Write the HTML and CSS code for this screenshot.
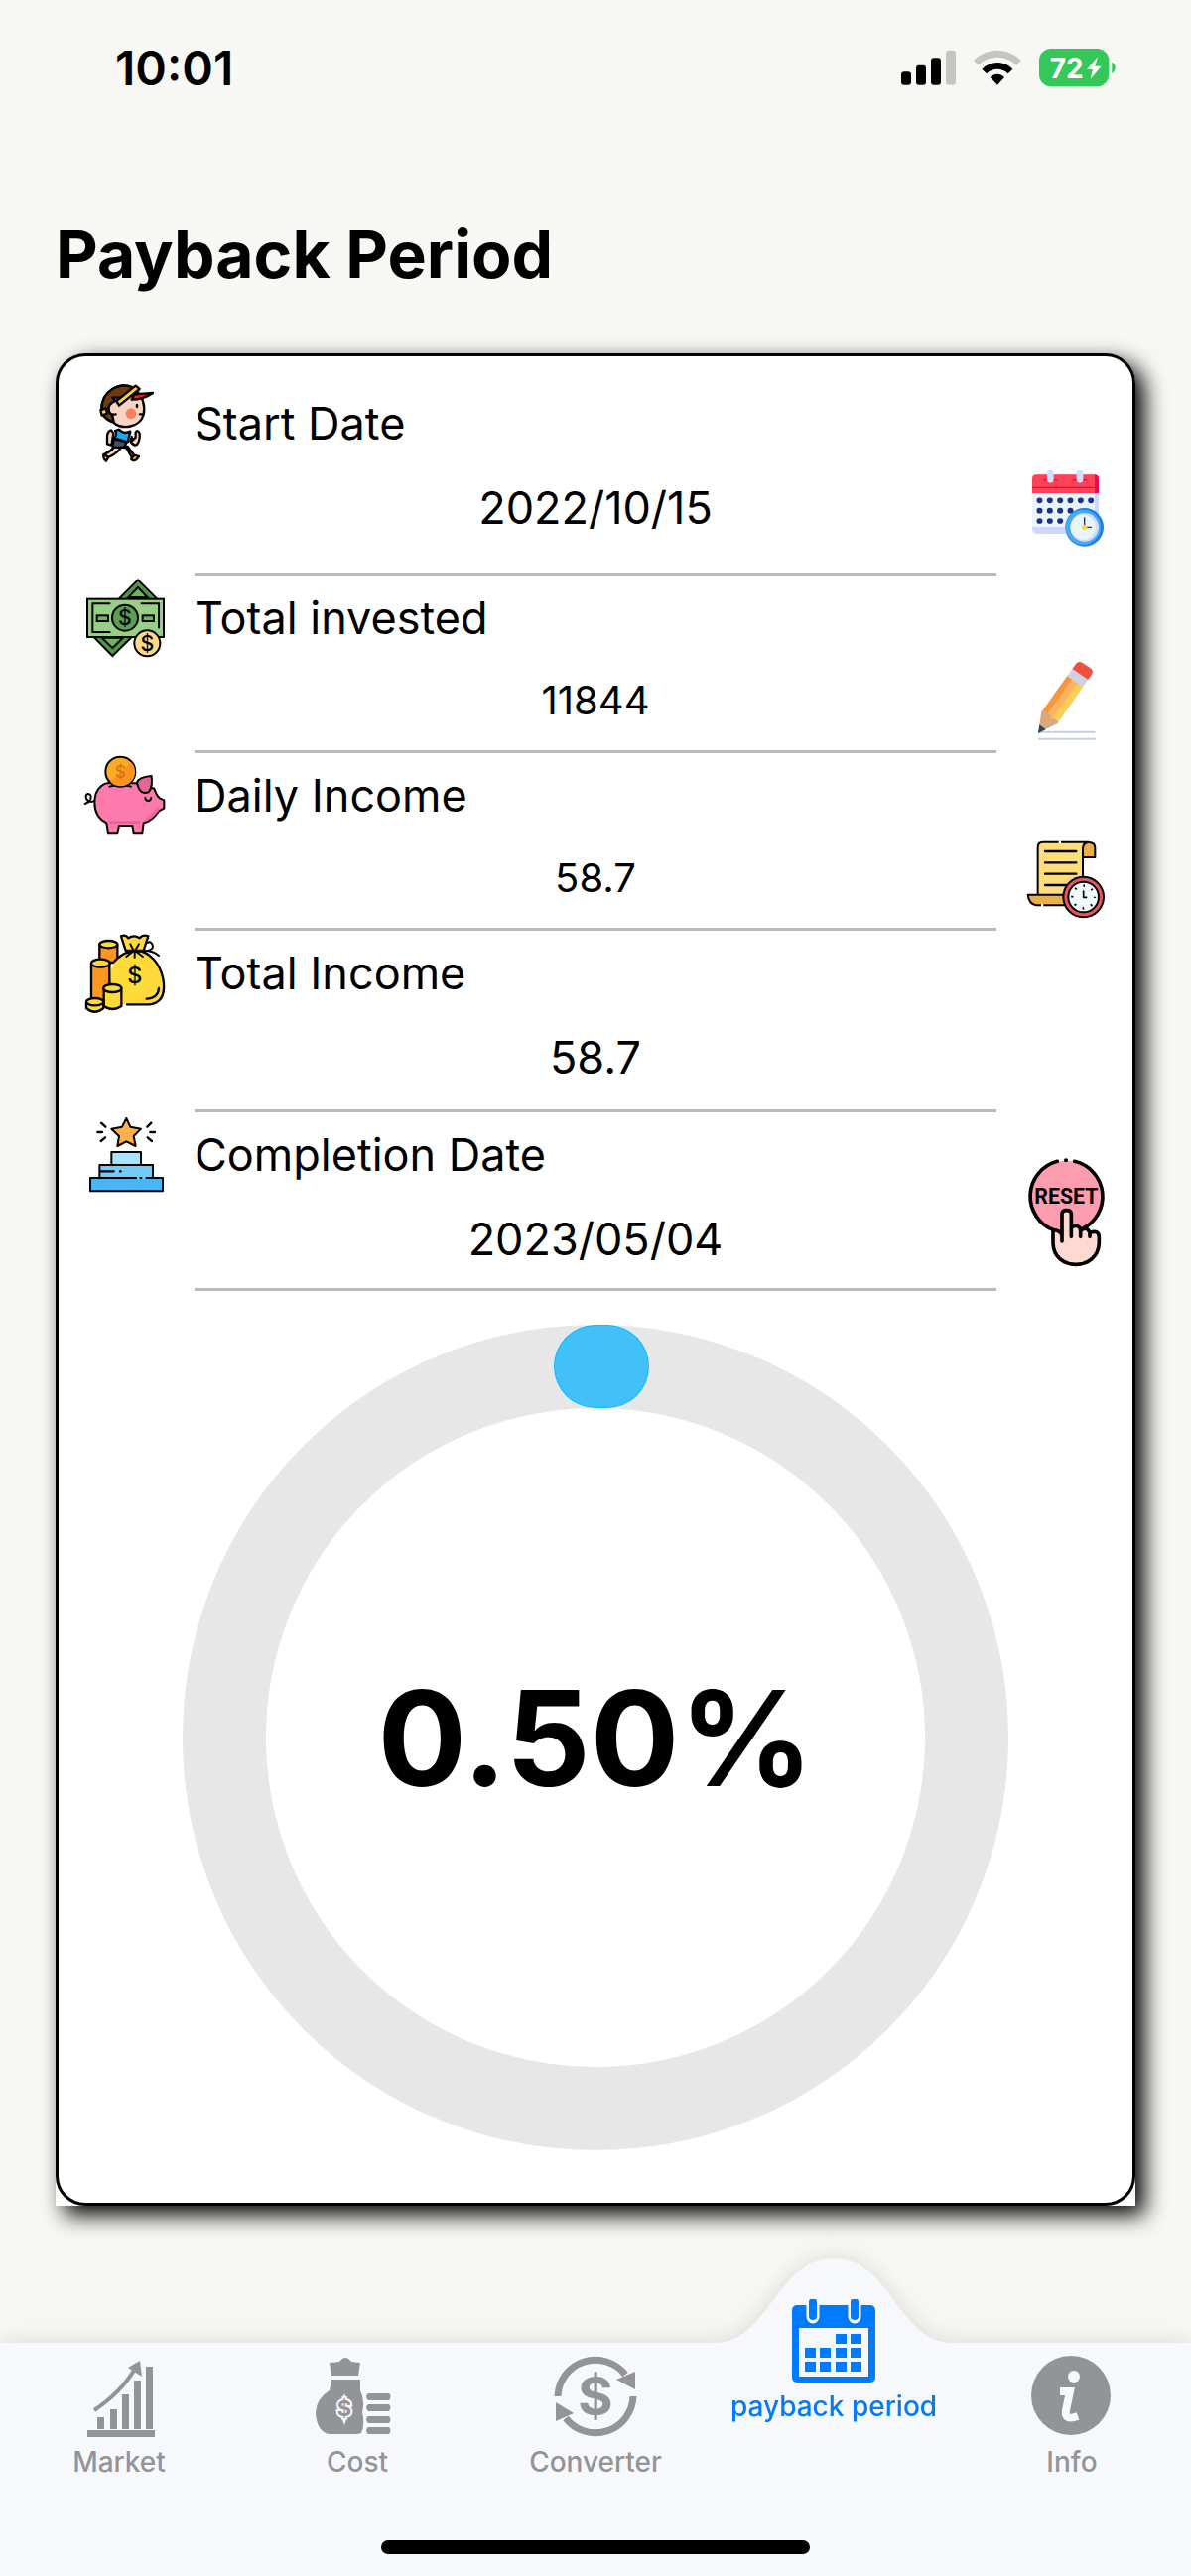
FILE: index.html
```html
<!DOCTYPE html>
<html lang="en">
<head>
<meta charset="utf-8">
<meta name="viewport" content="width=device-width, initial-scale=1">
<title>Payback Period</title>
<link rel="stylesheet" href="styles.css">
</head>
<body>
<header class="status">
  <span class="clock">10:01</span>
  <div class="indicators">
    <svg width="55" height="39" viewBox="87 55 165 117" aria-hidden="true">
      <rect x="87" y="125" width="30" height="40" rx="9"/>
      <rect x="132" y="105" width="30" height="60" rx="9"/>
      <rect x="177" y="83" width="30" height="82" rx="9"/>
      <rect x="222" y="60" width="30" height="105" rx="9" fill="#c5c5c3"/>
    </svg>
    <svg width="48" height="39" viewBox="304 55 144 117" aria-hidden="true">
      <path d="M304 91C344 50 407 50 447 91L433 105C400 73 351 73 318 105Z" fill="#c5c5c3"/>
      <path d="M329 117C355 90 396 90 422 117L408 131C390 113 361 113 343 131Z"/>
      <path d="M354 142C367 129 384 129 397 142L376 165Z"/>
    </svg>
    <svg width="77" height="39" viewBox="500 55 231 117" role="img" aria-label="Battery charging">
      <rect x="500" y="55" width="211" height="115" rx="36" fill="#35c759"/>
      <path d="M720 96Q730 100 730 112T720 130Z" fill="#35c759"/>
      <text x="532" y="146" class="battery-level">72</text>
      <path d="M677 80L644 118H662L655 147L688 108H669Z" fill="#fff"/>
    </svg>
  </div>
</header>

<main class="screen">
  <h1 class="title">Payback Period</h1>
  <section class="card">
    <div class="card-frame">
      <div class="row row-first">
        <svg class="icon" viewBox="48 51 240 240" aria-hidden="true">
          <g stroke="#000" stroke-width="7" stroke-linejoin="round" stroke-linecap="round">
            <path d="M126 190Q113 194 114 214V232L127 236L133 200Z" fill="#f9d3c5"/>
            <path d="M188 210L190 222L200 212V196Q206 188 212 200Q214 222 204 234Q194 240 184 224Z" fill="#f9d3c5"/>
            <path d="M136 240Q126 254 108 262L112 274Q136 268 156 244Z" fill="#f9d3c5"/>
            <path d="M158 242L172 244L188 272L198 270L176 240Z" fill="#f9d3c5"/>
            <path d="M103 264Q101 278 111 284L118 272Z" fill="#f6c21c"/>
            <path d="M186 278Q192 286 202 280L210 270L196 266Z" fill="#f6c21c"/>
            <path d="M138 192Q146 204 134 214L176 226L184 194Q164 204 150 188Z" fill="#18a8f2"/>
            <path d="M134 216L130 240Q150 246 168 240L172 226Z" fill="#42506a"/>
            <path d="M96 132C96 72 152 40 196 64C222 86 230 118 224 144C212 182 160 190 134 168Q108 160 96 132Z" fill="#f9d3c5"/>
            <path d="M98 126C96 74 150 42 194 62L144 108L154 92H130L140 104L120 124L130 148L134 166Q108 158 98 140Z" fill="#6d3a12"/>
            <path d="M142 100Q112 112 120 134Q124 146 140 142" fill="#f9d3c5"/>
            <path d="M94 130L110 124L114 140L98 146Z" fill="#fdcf3a"/>
            <path d="M196 82L252 78Q224 98 188 98Z" fill="#e2252b"/>
            <path d="M200 56L212 66L150 116L142 102Z" fill="#fdcf3a"/>
            <path d="M213 142H222" fill="none"/>
          </g>
          <circle cx="186" cy="140" r="16" fill="#f9805f"/>
          <ellipse cx="204" cy="117" rx="4" ry="7"/>
        </svg>
        <div class="entry">
          <span class="label" id="start">Start Date</span>
          <output class="value" aria-labelledby="start">2022/10/15</output>
        </div>
        <button class="action" type="button" aria-label="Choose start date">
          <svg class="icon" viewBox="162 96 240 240" aria-hidden="true">
            <rect x="180" y="115" width="201" height="179" rx="14" fill="#cfd8fb"/>
            <path d="M180 150H369V263Q369 273 359 273H180Z" fill="#e9f4fc"/>
            <path d="M180 171V128Q180 115 193 115H367Q381 115 381 128V171Z" fill="#fe4155"/>
            <path d="M369 115Q381 116 381 128V171H369Z" fill="#e40e50"/>
            <path d="M180 154H381M214 131H257M303 131H345" stroke="#d41247" stroke-width="4" fill="none"/>
            <path d="M235 111V130M324 111V130" stroke="#d5defa" stroke-width="20" stroke-linecap="round"/>
            <path d="M202 193h1M233 193h1M264 193h1M295 193h1M326 193h1M357 193h1M202 224h1M233 224h1M264 224h1M295 224h1M202 255h1M233 255h1M264 255h1" stroke="#1a3485" stroke-width="17" stroke-linecap="round"/>
            <circle cx="338" cy="274" r="58" fill="#1f7de6"/>
            <circle cx="334" cy="274" r="53" fill="#48a7f6"/>
            <circle cx="338" cy="274" r="43" fill="#d0dafa"/>
            <circle cx="334" cy="274" r="38" fill="#e9f4fc"/>
            <path d="M338 244V274H360" fill="none" stroke="#1a3485" stroke-width="4"/>
            <circle cx="338" cy="274" r="8" fill="#ffd23b"/>
          </svg>
        </button>
      </div>

      <div class="row">
        <svg class="icon" viewBox="48 39 240 240" aria-hidden="true">
          <g stroke="#000" stroke-width="6">
            <path d="M207 43L268 104H146Z" fill="#4f9747"/>
            <path d="M207 66L236 96H178Z" fill="#6fb463"/>
            <path d="M130 273L70 212H192Z" fill="#4f9747"/>
            <path d="M130 249L98 218H162Z" fill="#6fb463"/>
            <rect x="54" y="101" width="231" height="115" fill="#98cf85"/>
            <path d="M124 115H70V201H124M215 115H270V190" fill="none"/>
            <circle cx="168" cy="158" r="39" fill="#5aa052"/>
            <rect x="83" y="151" width="34" height="17" fill="#6fb463"/>
            <rect x="221" y="151" width="34" height="17" fill="#6fb463"/>
            <circle cx="235" cy="235" r="39" fill="#fbdb86"/>
          </g>
          <text class="coin" x="168" y="181" font-size="64">$</text>
          <text class="coin" x="235" y="258" font-size="64">$</text>
        </svg>
        <div class="entry">
          <label class="label" for="invested">Total invested</label>
          <input class="value field" id="invested" type="text" inputmode="decimal" value="11844">
        </div>
        <button class="action" type="button" aria-label="Edit total invested">
          <svg class="icon" viewBox="162 678 240 240" aria-hidden="true">
            <path d="M200 890H235M241 890H368M201 911H369" stroke="#c9cde2" stroke-width="6" stroke-linecap="round"/>
            <path d="M286 720L211 826L229 838L303 731Z" fill="#f8963d"/>
            <path d="M301 729L226 836L244 852L321 743Z" fill="#fbb45d"/>
            <path d="M318 741L240 850L257 863L334 753Z" fill="#fecd57"/>
            <path d="M208 828Q216 822 226 834Q234 834 238 848Q254 850 258 863L222 881L202 868Z" fill="#dda77c"/>
            <path d="M202 868L222 882L198 894Z" fill="#2b4654"/>
            <path d="M301 699L286 721L333 754L349 732Z" fill="#cfd2e4"/>
            <path d="M301 699L312 684Q321 674 332 681L356 697Q367 705 360 716L349 732Z" fill="#ee523c"/>
          </svg>
        </button>
      </div>

      <div class="row">
        <svg class="icon" viewBox="48 576 240 240" aria-hidden="true">
          <g stroke="#000" stroke-width="6" stroke-linejoin="round" stroke-linecap="round">
            <path d="M73 712Q60 718 52 706Q46 694 56 690Q68 690 64 706Q60 716 47 720" fill="none"/>
            <path d="M76 716C76 670 106 654 130 658H200L214 662L256 674Q264 698 274 704L286 709V734L270 742Q250 772 224 778L220 808H194L190 786H150L145 808H117L112 778Q76 760 76 716Z" fill="#fd7bac"/>
            <path d="M204 656Q208 640 248 636Q252 668 240 684Q212 696 204 656Z" fill="#e4659b"/>
            <path d="M229 702Q230 711 238 711Q246 711 247 702M121 668Q154 658 186 668" fill="none"/>
            <circle cx="154" cy="623" r="45" fill="#fbab26"/>
          </g>
          <path d="M124 654L186 594A42 42 0 0 1 124 654Z" fill="#fd941f"/>
          <path d="M118 772H216L214 780H120ZM222 772Q252 750 266 728L272 738Q252 768 224 776Z" fill="#e4659b"/>
          <text class="coin coin-light" x="154" y="641" font-size="52">$</text>
        </svg>
        <div class="entry">
          <label class="label" for="daily">Daily Income</label>
          <input class="value field" id="daily" type="text" inputmode="decimal" value="58.7">
        </div>
        <button class="action" type="button" aria-label="Income history">
          <svg class="icon" viewBox="162 1216 240 240" aria-hidden="true">
            <g stroke="#000" stroke-width="6" stroke-linejoin="round" stroke-linecap="round">
              <path d="M333 1270V1238Q336 1224 352 1225Q370 1226 370 1242V1270Z" fill="#e9af49"/>
              <path d="M197 1384V1240Q197 1224 212 1224H350Q333 1226 333 1244V1384Z" fill="#fedd7c"/>
              <path d="M167 1383H290V1415H192Q170 1412 167 1383Z" fill="#e9af49"/>
              <path d="M219 1252H313M219 1286H313M219 1320H313M219 1354H290" stroke-width="7"/>
              <circle cx="335" cy="1390" r="61" fill="#e85463"/>
              <circle cx="335" cy="1390" r="46" fill="#f1f9fd"/>
              <path d="M335 1372V1391H344" fill="none" stroke-width="5"/>
            </g>
            <circle cx="335" cy="1390" r="34" fill="none" stroke="#000" stroke-width="7" stroke-dasharray="5 21.7" stroke-dashoffset="2"/>
            <path d="M260 1220V1229H267V1220ZM207 1411V1420H214V1411Z" fill="#fff"/>
          </svg>
        </button>
      </div>

      <div class="row">
        <svg class="icon" viewBox="48 33 240 240" aria-hidden="true">
          <g stroke="#000" stroke-width="7" stroke-linejoin="round" stroke-linecap="round">
            <path d="M91 66V120H145V66" fill="#fe9722"/>
            <ellipse cx="118" cy="65" rx="27" ry="11" fill="#fedb38"/>
            <path d="M176 86C140 100 122 132 120 180V246H245Q290 242 285 180C280 140 258 100 218 84Z" fill="#fedb38" stroke="none"/>
            <path d="M174 247H242Q290 242 285 182C280 140 258 100 218 86M176 88Q152 98 136 116" fill="none"/>
            <path d="M170 84L156 40Q170 34 178 46Q196 34 212 46Q222 34 238 40L224 84Z" fill="#fedb38"/>
            <path d="M184 64L194 84L172 102M210 64L198 84L222 102M197 84V104M174 90L190 86M202 86Q262 88 250 64Q242 54 236 60M218 84Q252 82 270 99" fill="none" stroke-width="6"/>
            <path d="M270 198Q268 228 233 230" fill="none"/>
            <path d="M66 122V236H121V122" fill="#fe9722"/>
            <ellipse cx="94" cy="122" rx="28" ry="12" fill="#fedb38"/>
            <path d="M104 198V252Q130 270 157 252V198" fill="#fedb38"/>
            <ellipse cx="130" cy="198" rx="27" ry="12" fill="#fedb38"/>
            <path d="M51 240V258Q76 280 103 258V240" fill="#fedb38"/>
            <ellipse cx="77" cy="239" rx="26" ry="11" fill="#fedb38"/>
          </g>
          <text class="coin" x="197" y="184" font-size="70">$</text>
        </svg>
        <div class="entry">
          <span class="label" id="total">Total Income</span>
          <output class="value" aria-labelledby="total">58.7</output>
        </div>
      </div>

      <div class="row row-last">
        <svg class="icon" viewBox="48 585 240 240" aria-hidden="true">
          <g stroke="#000" stroke-width="6" stroke-linejoin="round">
            <path d="M172 594L184 620L216 626L194 648L200 678L172 664L145 678L150 648L127 626L159 620Z" fill="#fcb14b"/>
            <rect x="127" y="696" width="89" height="40" fill="#a9e2fa"/>
            <rect x="91" y="735" width="161" height="40" fill="#71cdf7"/>
            <rect x="63" y="774" width="219" height="40" fill="#4cb4f3"/>
          </g>
          <path d="M204 774H212M220 774H230" stroke="#71cdf7" stroke-width="7"/>
          <path d="M94 754H134M153 754h2M96 608L109 620M85 636H99M95 663L108 652M247 608L235 620M258 636H244M249 663L236 652" stroke="#000" stroke-width="7" stroke-linecap="round"/>
        </svg>
        <div class="entry">
          <span class="label" id="done">Completion Date</span>
          <output class="value" aria-labelledby="done">2023/05/04</output>
        </div>
        <button class="action" type="button" aria-label="Reset">
          <svg class="icon-tall" viewBox="162 142 240 330" aria-hidden="true">
            <circle cx="282" cy="258" r="108" fill="#fe9cb0"/>
            <path d="M308 152A109 109 0 0 1 330 357M256 152A109 109 0 0 0 246 360" fill="none" stroke="#000" stroke-width="11" stroke-linecap="round"/>
            <circle cx="282" cy="149" r="6"/>
            <text class="reset-word" x="283" y="281">RESET</text>
            <path d="M243 362Q262 362 270 388V312Q270 300 284 300Q298 300 298 312V352Q312 340 325 356Q342 348 354 368Q382 356 382 382V400C380 440 350 464 312 464C272 464 244 440 242 400Z" fill="#fed9d2"/>
            <path d="M243 362V400C244 440 274 464 312 464C350 464 380 440 382 400V382Q382 358 354 368V380M243 360Q264 360 270 376V394V312Q270 300 284 300Q298 300 298 312V380V352Q322 340 326 360V380V362Q344 346 354 368" fill="none" stroke="#000" stroke-width="11" stroke-linecap="round" stroke-linejoin="round"/>
          </svg>
        </button>
      </div>

      <div class="progress">
        <svg class="ring" viewBox="0 0 832 832" aria-hidden="true">
          <circle cx="416" cy="416" r="374" fill="none" stroke="#e7e7e7" stroke-width="84"/>
          <path d="M416 42A374 374 0 0 1 428 42" fill="none" stroke="#12b9fe" stroke-width="84" stroke-linecap="round"/>
          <path d="M416 42A374 374 0 0 1 428 42" fill="none" stroke="#42c0f8" stroke-width="82" stroke-linecap="round"/>
        </svg>
        <strong class="percent">0.50%</strong>
      </div>
    </div>
  </section>
</main>

<nav class="tabs">
  <div class="tab-list">
    <a class="tab" href="#market">
      <svg class="tab-icon" viewBox="0 0 84 84" aria-hidden="true">
        <path d="M10 76H78V83H10ZM20 63h7V75h-7ZM33 55h7V75h-7ZM45 40h7V75h-7ZM57 26h7V75h-7ZM69 12h7V75h-7Z"/>
        <path d="M17 56Q44 38 58 14" fill="none" stroke="currentColor" stroke-width="4"/>
        <path d="M63 6L51 13L65 22Z"/>
      </svg>
      Market
    </a>
    <a class="tab" href="#cost">
      <svg class="tab-icon" viewBox="0 0 84 84" aria-hidden="true">
        <path d="M14 8L24 7Q30 -1 36 7L45 8L43 21H16ZM16 25H45V36Q50 46 47 58Q50 70 46 79L42 80H14Q1 78 0 58Q1 44 14 36Z"/>
        <path d="M53 39H74Q77 42 74 46H53Q49 42 53 39ZM53 50H74Q77 53 74 57H53Q49 53 53 50ZM53 62H74Q77 65 74 69H53Q49 65 53 62ZM53 73H74Q77 76 74 80H53Q49 76 53 73Z"/>
        <path d="M29 39L35 54L29 71L23 54Z" fill="#f7f8fb"/>
        <text class="tab-coin" x="29" y="62" font-size="22" stroke="#f7f8fb" stroke-width="4" paint-order="stroke">$</text>
      </svg>
      Cost
    </a>
    <a class="tab" href="#converter">
      <svg class="tab-icon" viewBox="0 0 84 84" aria-hidden="true">
        <path d="M4 42A38 38 0 0 1 72 20M80 42A38 38 0 0 1 12 64" fill="none" stroke="currentColor" stroke-width="7"/>
        <path d="M82 17V35L63 25ZM2 67V48L20 59Z"/>
        <text class="tab-coin" x="42" y="61" font-size="54">$</text>
      </svg>
      Converter
    </a>
    <a class="tab tab-active" href="#payback" aria-current="page">
      <svg class="bump" viewBox="0 0 240 86" aria-hidden="true"><path d="M0 86V85C55 85 62 0 120 0S185 85 240 85V86Z"/></svg>
      <svg class="tab-icon" viewBox="0 0 84 84" aria-hidden="true">
        <rect x="0" y="6" width="84" height="78" rx="5"/>
        <path d="M7 29H77V78H7Z" fill="#f7f8fb"/>
        <path d="M21 0V18M63 0V18" stroke="#f7f8fb" stroke-width="13" stroke-linecap="round"/>
        <path d="M21 3V17M63 3V17" stroke="currentColor" stroke-width="8" stroke-linecap="round"/>
        <path d="M44 35h11v10h-11ZM59 35h11v10h-11ZM13 49h11v10h-11ZM28 49h11v10h-11ZM44 49h11v10h-11ZM59 49h11v10h-11ZM13 63h11v10h-11ZM28 63h11v10h-11ZM44 63h11v10h-11ZM59 63h11v10h-11Z"/>
      </svg>
      payback period
    </a>
    <a class="tab" href="#info">
      <svg class="tab-icon" viewBox="0 0 84 84" aria-hidden="true">
        <circle cx="41" cy="41" r="40"/>
        <circle cx="44" cy="22" r="6" fill="#f7f8fb"/>
        <path d="M30 37H40L36 56Q34 67 48 62" fill="none" stroke="#f7f8fb" stroke-width="8"/>
      </svg>
      Info
    </a>
  </div>
  <div class="home-bar"></div>
</nav>
</body>
</html>
```
FILE: styles.css
```css
* {
  box-sizing: border-box;
}

body {
  margin: 0;
  min-height: 100vh;
  display: flex;
  flex-direction: column;
  background: #f7f8f3;
  color: #000;
  font-family: Inter, "Liberation Sans", sans-serif;
}

svg {
  display: block;
  flex: none;
}

/* Status bar */
.status {
  display: flex;
  align-items: center;
  justify-content: space-between;
  height: 136px;
  padding: 0 76px 0 116px;
}

.clock {
  font-size: 48px;
  font-weight: 600;
}

.indicators {
  display: flex;
  gap: 18px;
}

.battery-level {
  font-size: 84px;
  font-weight: 700;
  fill: #fff;
}

/* Main card */
.screen {
  padding: 80px 56px 138px;
}

.title {
  margin: 0 0 60px;
  font-size: 66px;
  line-height: 80px;
  font-weight: 700;
}

.card {
  background: #fff;
  border-radius: 30px 30px 0 0;
  box-shadow: 9px 9px 22px #000;
}

.card-frame {
  padding: 25px 27px 53px;
  border: 3px solid #000;
  border-radius: 30px;
}

.row {
  display: grid;
  grid-template-columns: 80px 1fr 80px;
  column-gap: 30px;
}

.icon {
  width: 80px;
  height: 80px;
  overflow: visible;
}

.icon-tall {
  width: 80px;
  height: 110px;
}

.row > .icon {
  margin-top: 3px;
}

.entry {
  display: flex;
  flex-direction: column;
  min-width: 0;
  padding: 3px 0 8px;
  border-bottom: 3px solid #b9b9b9;
}

.row-first .entry {
  padding-bottom: 21px;
}

.row-last .entry {
  padding-bottom: 5px;
}

.label {
  font-size: 45px;
  line-height: 80px;
}

.value {
  display: block;
  height: 89px;
  font-size: 45px;
  line-height: 89px;
  text-align: center;
}

.field {
  width: 100%;
  height: 85px;
  padding: 0;
  border: 0;
  outline: 0;
  background: none;
  color: inherit;
  font-family: inherit;
  font-size: 40px;
  line-height: 85px;
}

.action {
  align-self: end;
  margin: 0 0 12px;
  padding: 0;
  border: 0;
  background: none;
  cursor: pointer;
}

.row-first .action {
  margin-bottom: 28px;
}

.row-last .action {
  margin-bottom: 24px;
}

.coin {
  font-weight: 500;
  text-anchor: middle;
}

.coin-light {
  fill: #d9701a;
}

.reset-word {
  font-family: Roboto, sans-serif;
  font-size: 64px;
  font-weight: 700;
  text-anchor: middle;
}

/* Progress ring */
.progress {
  display: grid;
  place-items: center;
  padding-top: 34px;
}

.progress > * {
  grid-area: 1 / 1;
}

.ring {
  width: 100%;
  max-width: 832px;
}

.percent {
  font-size: 133px;
  font-weight: 700;
}

/* Tab bar */
.tabs {
  display: flex;
  flex-direction: column;
  justify-content: space-between;
  min-height: 235px;
  margin-top: auto;
  padding: 12px 0 22px;
  background: #f7f8fb;
  filter: drop-shadow(0 0 12px rgba(0, 0, 0, 0.12));
}

.tab-list {
  display: grid;
  grid-template-columns: repeat(5, 1fr);
}

.tab {
  position: relative;
  display: flex;
  flex-direction: column;
  align-items: center;
  gap: 8px;
  color: #939498;
  font-size: 28px;
  line-height: 32px;
  font-weight: 500;
  white-space: nowrap;
  text-decoration: none;
}

.tab-icon {
  position: relative;
  width: 84px;
  height: 84px;
  fill: currentColor;
}

.tab-coin {
  font-weight: 700;
  text-anchor: middle;
}

.tab-active {
  margin-top: -56px;
  margin-bottom: 56px;
  color: #007aff;
}

.bump {
  position: absolute;
  top: -41px;
  left: 50%;
  width: 240px;
  height: 86px;
  margin-left: -120px;
  fill: #f7f8fb;
}

.home-bar {
  align-self: center;
  width: 36%;
  height: 14px;
  border-radius: 7px;
  background: #000;
}
```
